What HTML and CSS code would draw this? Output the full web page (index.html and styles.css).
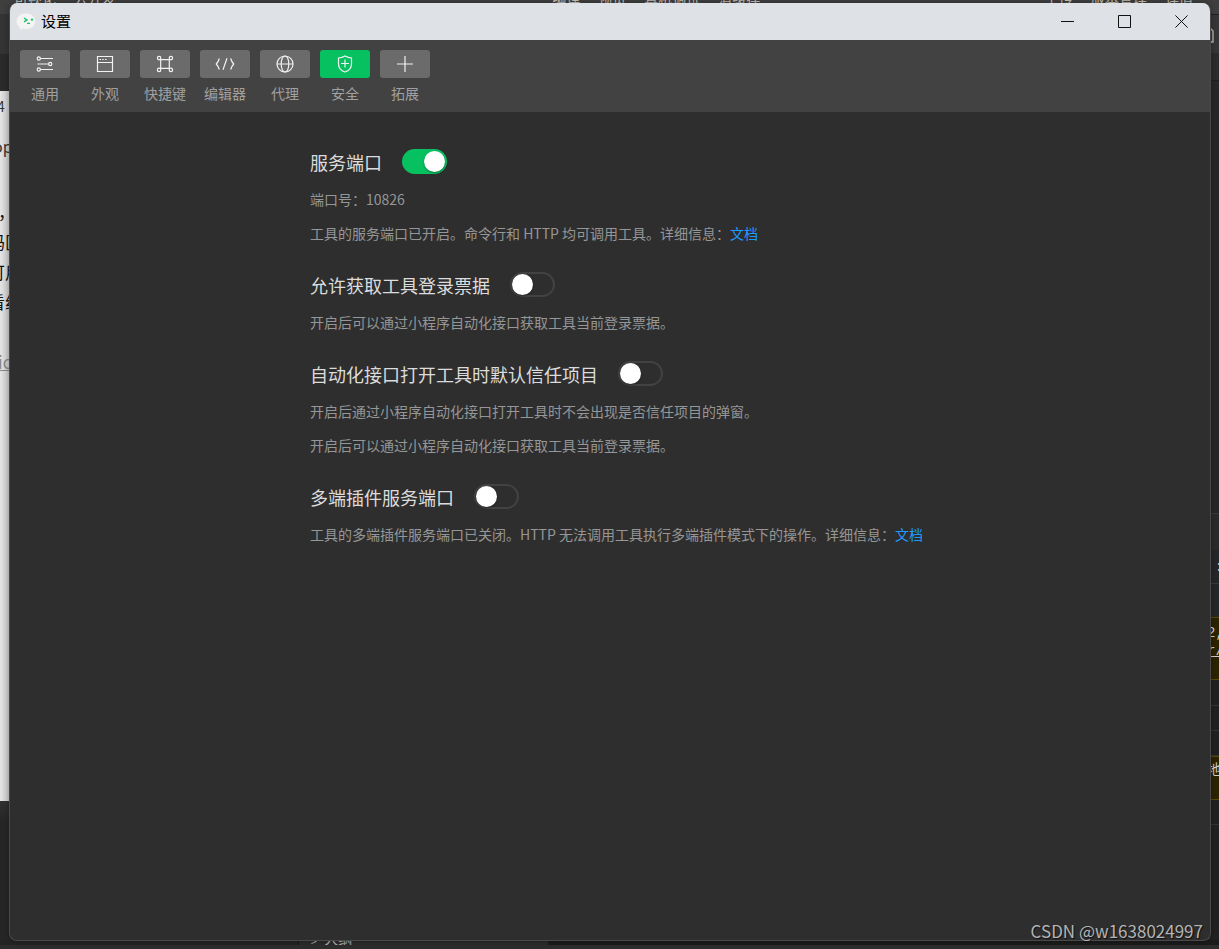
FILE: index.html
```html
<!DOCTYPE html>
<html lang="zh-CN">
<head>
<meta charset="utf-8">
<title>设置</title>
<link rel="stylesheet" href="styles.css">
</head>
<body>
<div class="backdrop" aria-hidden="true">
  <div class="back-top">
    <span class="back-group"><span>可视化</span><span>云开发</span></span>
    <span class="back-group middle"><span>编译</span><span>预览</span><span>真机调试</span><span>清缓存</span></span>
    <span class="back-group"><span>上传</span><span>版本管理</span><span>详情</span></span>
  </div>
  <div class="back-left">
    <div class="tone-a"></div><div class="tone-b"></div><div class="tone-c"></div>
    <div class="paper">
      <p class="small">4</p>
      <p class="latin">op</p>
      <p class="comma">，</p>
      <p>码区</p>
      <p>可用</p>
      <p>看组</p>
      <p class="link">ic</p>
    </div>
  </div>
  <div class="back-right">
    <div class="r-top"></div>
    <div class="r-tool"><svg width="9" height="20" viewBox="0 0 9 20"><path d="M0 4h1l2 2v11H0" fill="none" stroke="#b9b4ab" stroke-width="1.4"/></svg></div>
    <div class="r-tab"></div>
    <div class="r-code"></div>
    <div class="r-head"></div>
    <div class="r-filter"><span>:</span></div>
    <div class="r-blue"></div>
    <div class="r-warn"><span>2,</span><u>r/</u></div>
    <div class="r-line tall"></div>
    <div class="r-line"></div>
    <div class="r-line"></div>
    <div class="r-warn short"><b>地</b></div>
    <div class="r-line"></div>
  </div>
  <div class="back-bottom"><div class="b-one"></div><div class="b-two"><span>﹥ 大纲</span></div><div class="b-three"></div></div>
</div>

<main class="window">
  <header class="titlebar">
    <svg class="logo" width="20" height="18" viewBox="0 0 20 18" aria-hidden="true">
      <path d="M10 .2C4.700.2.4 3.600.4 8.200c0 2.600 1.300 4.900 3.400 6.300L3.400 17.400l3.100-1.700c1.100.3 2.300.5 3.500.5 5.300 0 9.500-3.400 9.500-8S15.300.2 10 .2z" fill="#f4f4f4" stroke="#e4e4e2" stroke-width=".6"/>
      <path d="M8 5l3 1.900L8 8.900" fill="none" stroke="#1fbf6b" stroke-width="1.400"/>
      <path d="M11 10.300h3" stroke="#1fbf6b" stroke-width="1.300"/><circle cx="16" cy="6.600" r="1.200" fill="#1fbf6b"/>
    </svg>
    <h1 class="title">设置</h1>
    <div class="controls">
      <button type="button" aria-label="最小化"><svg width="13" height="13" viewBox="0 0 13 13"><path d="M0 6.500h13"/></svg></button>
      <button type="button" aria-label="最大化"><svg width="13" height="13" viewBox="0 0 13 13"><path d="M.5.5h12v12H.5z"/></svg></button>
      <button type="button" aria-label="关闭"><svg width="13" height="13" viewBox="0 0 13 13"><path d="M.4.4l12.200 12.200M12.600.4L.4 12.600"/></svg></button>
    </div>
  </header>

  <nav class="toolbar" aria-label="设置分类">
    <button type="button" class="tab"><span class="tile"><svg width="18" height="18" viewBox="0 0 18 18"><path d="M4.500 3.500H17M1.500 9h11M4.500 14.500H17"/><circle cx="2.800" cy="3.500" r="1.600"/><circle cx="14.200" cy="9" r="1.600"/><circle cx="2.800" cy="14.500" r="1.600"/></svg></span>通用</button>
    <button type="button" class="tab"><span class="tile"><svg width="18" height="18" viewBox="0 0 18 18"><path d="M1.500 1.500h15v15h-15zM1.500 7.500h15M3.500 4.500H5M6.200 4.500h1.500M9 4.500h1.500"/></svg></span>外观</button>
    <button type="button" class="tab"><span class="tile"><svg width="18" height="18" viewBox="0 0 18 18"><path d="M4.700 4.700h8.600v8.600H4.700z"/><circle cx="3.100" cy="3.100" r="1.700"/><circle cx="14.900" cy="3.100" r="1.700"/><circle cx="3.100" cy="14.900" r="1.700"/><circle cx="14.900" cy="14.900" r="1.700"/></svg></span>快捷键</button>
    <button type="button" class="tab"><span class="tile"><svg width="20" height="18" viewBox="0 0 20 18"><path d="M4.300 3.500Q3.500 6.500 1.300 9q2.200 2.500 3 5.500M15.700 3.500q.8 3 3 5.500-2.200 2.500-3 5.500M12 3.300L8 14.700"/></svg></span>编辑器</button>
    <button type="button" class="tab"><span class="tile"><svg width="18" height="18" viewBox="0 0 18 18"><circle cx="9" cy="9" r="8"/><ellipse cx="9" cy="9" rx="3.800" ry="8"/><path d="M1 9h16"/></svg></span>代理</button>
    <button type="button" class="tab active" aria-current="page"><span class="tile"><svg width="18" height="18" viewBox="0 0 18 18"><path d="M9 1Q6 2.800 2.500 3v6c0 4 3 6.800 6.500 8 3.500-1.200 6.500-4 6.500-8V3Q12 2.800 9 1zM9 4.500v8M5 8.500h8"/></svg></span>安全</button>
    <button type="button" class="tab"><span class="tile"><svg width="18" height="18" viewBox="0 0 18 18"><path d="M9 1v16M1 9h16"/></svg></span>拓展</button>
  </nav>

  <div class="content">
    <section class="setting">
      <div class="setting-head"><label for="service">服务端口</label><input id="service" class="switch" type="checkbox" checked></div>
      <p>端口号：10826</p>
      <p>工具的服务端口已开启。命令行和 HTTP 均可调用工具。详细信息：<a href="#service">文档</a></p>
    </section>
    <section class="setting">
      <div class="setting-head"><label for="ticket">允许获取工具登录票据</label><input id="ticket" class="switch" type="checkbox"></div>
      <p>开启后可以通过小程序自动化接口获取工具当前登录票据。</p>
    </section>
    <section class="setting">
      <div class="setting-head"><label for="trust">自动化接口打开工具时默认信任项目</label><input id="trust" class="switch" type="checkbox"></div>
      <p>开启后通过小程序自动化接口打开工具时不会出现是否信任项目的弹窗。</p>
      <p>开启后可以通过小程序自动化接口获取工具当前登录票据。</p>
    </section>
    <section class="setting">
      <div class="setting-head"><label for="plugin">多端插件服务端口</label><input id="plugin" class="switch" type="checkbox"></div>
      <p>工具的多端插件服务端口已关闭。HTTP 无法调用工具执行多端插件模式下的操作。详细信息：<a href="#plugin">文档</a></p>
    </section>
  </div>
</main>
<div class="watermark">CSDN @w1638024997</div>
</body>
</html>
```
FILE: styles.css
```css
* { box-sizing: border-box; }

body {
  margin: 0;
  min-height: 100vh;
  display: flex;
  padding: 3px 8px 8px 9px;
  background: #272727;
  font-family: "Noto Sans CJK SC", sans-serif;
  font-size: 14px;
  position: relative;
  overflow: hidden;
}

p, h1 { margin: 0; font-weight: 400; }
button { font: inherit; border: 0; padding: 0; background: none; color: inherit; }
svg { display: block; fill: none; }

/* Windows behind the dialog */
.backdrop { position: absolute; inset: 0; overflow: hidden; }
.back-top {
  position: absolute; top: 0; left: 0; right: 0; height: 14px;
  z-index: 1;
  display: flex;
  padding: 0 26px 0 14px;
  background: #3f3f3f;
  color: #c4c0b8;
  line-height: 20px;
}
.back-group { display: flex; gap: 18px; margin-top: -12px; }
.back-group.middle { margin-left: 37%; margin-right: auto; }
.back-left {
  position: absolute; top: 0; bottom: 0; left: 0; width: 10px;
  overflow: hidden;
  display: flex; flex-direction: column;
  background: linear-gradient(#303030, #262626 20px) 0 801px no-repeat #262626;
}
.tone-a { height: 14px; background: #3f3f3f; }
.tone-b { height: 40px; background: #343434; }
.tone-c { height: 37px; background: #2a2a2a; }
.paper {
  height: 710px;
  background: linear-gradient(90deg, #e4e4e4, #c6c6c6);
  color: #111;
  font-size: 17px;
  line-height: 30px;
  white-space: nowrap;
}
.paper p { text-indent: -12px; height: 30px; }
.paper .small { font-size: 14px; text-indent: -3px; color: #333; }
.paper .latin { font-size: 16px; text-indent: -7px; margin-top: 10px; color: #333; }
.paper .comma { margin-top: 36px; text-indent: -2px; }
.paper .link { margin-top: 30px; text-indent: -2px; color: #888; text-decoration: underline; }

.back-right {
  position: absolute; top: 0; bottom: 0; right: 0; width: 9px;
  overflow: hidden;
  display: flex; flex-direction: column;
  background: #212121;
  color: #d0d0d0;
}
.r-top { height: 15px; }
.r-tool { height: 38px; padding-top: 10px; background: #363636; }
.r-tab { height: 28px; background: #2c2c2c; border-bottom: 1px solid #1e1e1e; }
.r-code { height: 432px; background: #272727; }
.r-head { height: 37px; background: #2a2a2a; border-top: 1px solid #3a3a3a; }
.r-filter { height: 33px; background: #242629; padding-left: 7px; line-height: 30px; }
.r-blue { height: 34px; background: #242629; border-top: 1px solid #3a3a3a; }
.r-warn {
  height: 63px;
  padding-top: 6px;
  display: flex; flex-direction: column;
  background: #2b2300;
  border: solid #5c4700; border-width: 1px 0;
  line-height: 18px;
  font-family: "Liberation Mono", monospace;
  text-indent: -3px;
}
.r-warn.short { height: 44px; padding-top: 2px; font-family: "Noto Sans CJK SC", sans-serif; }
.r-warn b { font-weight: 400; }
.r-line { height: 25px; border-bottom: 1px solid #333; }
.r-line.tall { height: 26px; }

.back-bottom {
  position: absolute; left: 0; right: 0; bottom: 0; height: 9px;
  display: flex;
  background: #292929;
  border-bottom: 4px solid #2d2d2d;
}
.b-one { flex: 0 0 299px; background: #242424; border-right: 1px solid #151515; }
.b-two { flex: 0 0 249px; background: #2b2b2b; padding-left: 8px; color: #aaa; line-height: 20px; }
.b-two span { display: block; margin-top: -12px; height: 17px; overflow: hidden; }
.b-three { flex: 1; background: #1b1b1b; }

/* Dialog */
.window {
  position: relative;
  z-index: 2;
  flex: 1;
  display: flex; flex-direction: column;
  background: #2e2e2e;
  border: solid #4a4a4a; border-width: 0 1px 1px;
  border-radius: 8px;
  overflow: hidden;
  box-shadow: 0 0 6px rgba(0, 0, 0, .3);
}
.titlebar {
  display: flex; align-items: center;
  height: 37px;
  padding-left: 6px;
  gap: 5px;
  background: #dee1e6;
  color: #000;
}
.title { font-size: 15px; line-height: 20px; padding-bottom: 2px; }
.controls { display: flex; margin-left: auto; align-self: stretch; }
.controls button { width: 57px; display: grid; place-items: center; }
.controls svg { stroke: #111; stroke-width: 1px; }

.toolbar {
  display: flex; gap: 10px;
  height: 72px;
  padding: 10px;
  background: #424242;
}
.tab {
  width: 50px;
  display: flex; flex-direction: column; align-items: center; justify-content: flex-start; gap: 5px;
  color: #a0a0a0;
  line-height: 20px;
  white-space: nowrap;
}
.tile {
  flex: none;
  width: 50px; height: 28px;
  display: grid; place-items: center;
  border-radius: 3px;
  background: #6b6b6b;
}
.tile svg { stroke: #f2f2f2; stroke-width: 1.2px; }
.active .tile { background: #07c160; }

.content {
  width: 100%;
  max-width: 600px;
  margin: 0 auto;
  padding: 37px 0;
  display: flex; flex-direction: column; gap: 29px;
}
.setting {
  display: flex; flex-direction: column; gap: 14px;
  color: #969696;
  line-height: 20px;
  white-space: nowrap;
}
.setting-head { display: flex; align-items: flex-start; gap: 20px; height: 26px; }
.setting-head label { font-size: 18px; line-height: 26px; color: #dcdcdc; }
.setting a { color: #1e9bff; text-decoration: none; }

.switch {
  appearance: none;
  margin: 0;
  width: 45px; height: 25px;
  border: 2px solid #424242;
  border-radius: 13px;
  display: flex; align-items: center;
}
.switch::before {
  content: "";
  width: 21px; height: 21px;
  border-radius: 50%;
  background: #fff;
  box-shadow: 0 1px 2px rgba(0, 0, 0, .4);
}
.switch:checked { background: #07c160; border-color: #07c160; justify-content: flex-end; }

.watermark {
  position: absolute; right: 16px; bottom: 6px;
  z-index: 3;
  font: 17px/24px "Noto Sans CJK SC", sans-serif;
  color: #b4b4b4;
  text-shadow: 1px 1px 1px #111;
}
```
